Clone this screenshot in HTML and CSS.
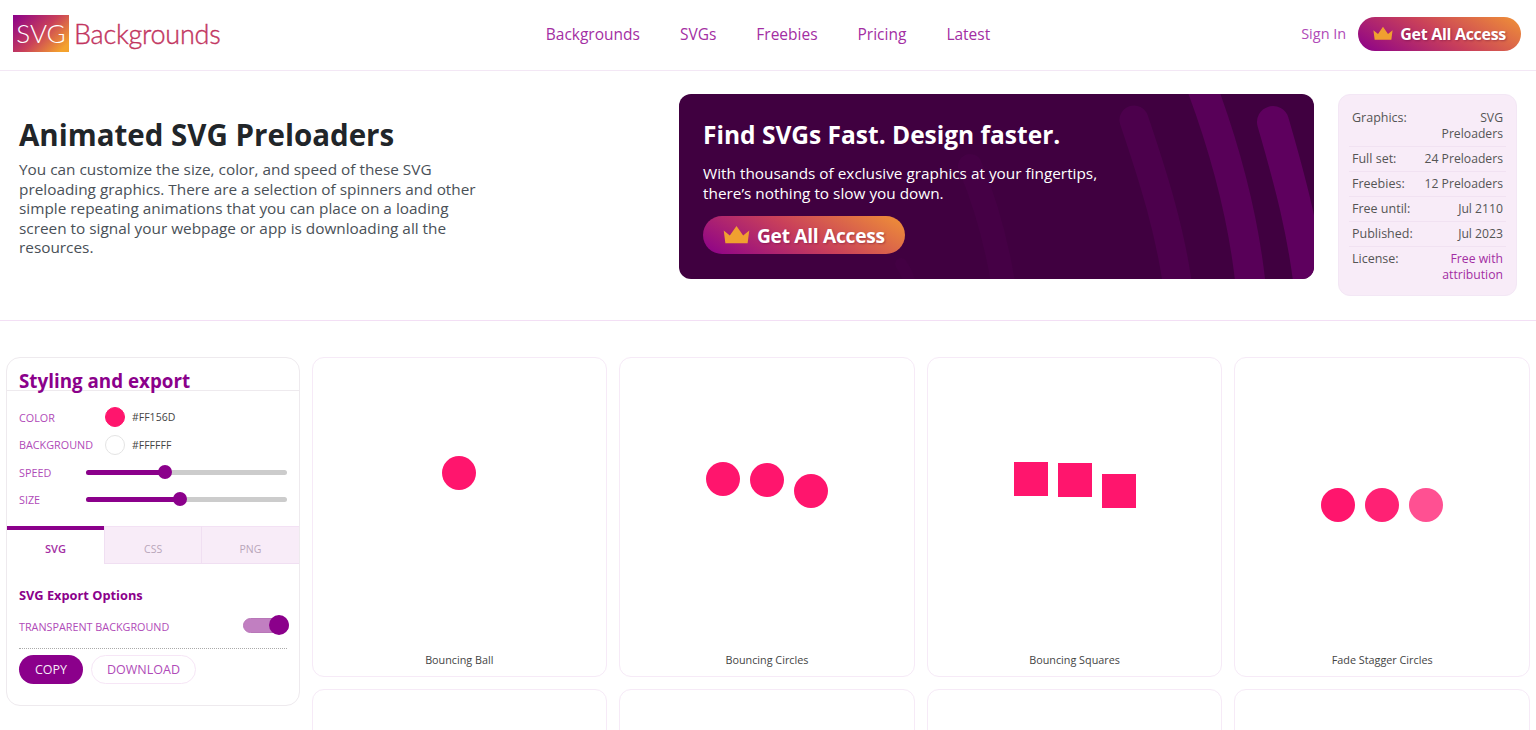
FILE: index.html
```html
<!DOCTYPE html>
<html lang="en">
<head>
  <meta charset="UTF-8" />
  <title>Animated SVG Preloaders - SVG Backgrounds</title>
  <link rel="stylesheet" href="styles.css">
</head>
<body>

  <!-- Header -->
  <header class="site-header">
    <a class="logo" href="#">
      <span class="logo-box">SVG</span>
      <span class="logo-name">Backgrounds</span>
    </a>
    <nav class="nav-links">
      <a href="#">Backgrounds</a>
      <a href="#">SVGs</a>
      <a href="#">Freebies</a>
      <a href="#">Pricing</a>
      <a href="#">Latest</a>
    </nav>
    <div class="header-actions">
      <a class="sign-in" href="#">Sign In</a>
      <a class="btn-access" href="#">
        <svg class="crown" viewBox="0 0 24 18"><path d="M2 16.500 0.500 5l5.500 4.500L12 1l6 8.500L23.500 5 22 16.500z"/></svg>
        Get All Access
      </a>
    </div>
  </header>

  <!-- Intro -->
  <section class="hero">
    <div class="hero-text">
      <h1>Animated SVG Preloaders</h1>
      <p>You can customize the size, color, and speed of these SVG preloading graphics. There are a selection of spinners and other simple repeating animations that you can place on a loading screen to signal your webpage or app is downloading all the resources.</p>
    </div>
    <div class="promo">
      <svg class="promo-arcs" viewBox="0 0 635 185">
        <path class="arc-0" d="M222 170C227 177 230 183 232 195" />
        <path class="arc-1" d="M291 72C305 105 318 150 325 195" />
        <path class="arc-2" d="M455 26C475 85 492 140 499 195" />
        <path class="arc-3" d="M518 -20C545 50 565 125 572 195" />
        <path class="arc-4" d="M594 28C612 90 625 140 631 195" />
      </svg>
      <h2>Find SVGs Fast. Design faster.</h2>
      <p>With thousands of exclusive graphics at your fingertips,<br>there’s nothing to slow you down.</p>
      <a class="btn-access btn-large" href="#">
        <svg class="crown" viewBox="0 0 24 18"><path d="M2 16.500 0.500 5l5.500 4.500L12 1l6 8.500L23.500 5 22 16.500z"/></svg>
        Get All Access
      </a>
    </div>
    <dl class="facts">
      <div class="fact"><dt>Graphics:</dt><dd>SVG Preloaders</dd></div>
      <div class="fact"><dt>Full set:</dt><dd>24 Preloaders</dd></div>
      <div class="fact"><dt>Freebies:</dt><dd>12 Preloaders</dd></div>
      <div class="fact"><dt>Free until:</dt><dd>Jul 2110</dd></div>
      <div class="fact"><dt>Published:</dt><dd>Jul 2023</dd></div>
      <div class="fact"><dt>License:</dt><dd><a href="#">Free with attribution</a></dd></div>
    </dl>
  </section>

  <!-- Main -->
  <main class="workspace">
    <aside class="panel">
      <h3 class="panel-title">Styling and export</h3>
      <div class="controls">
        <div class="control">
          <span class="control-label label-wide">Color</span>
          <span class="swatch swatch-pink"></span>
          <span class="hex">#FF156D</span>
        </div>
        <div class="control">
          <span class="control-label label-wide">Background</span>
          <span class="swatch"></span>
          <span class="hex">#FFFFFF</span>
        </div>
        <div class="control">
          <span class="control-label label-short">Speed</span>
          <div class="slider"><div class="slider-fill fill-speed"><span class="slider-thumb"></span></div></div>
        </div>
        <div class="control">
          <span class="control-label label-short">Size</span>
          <div class="slider"><div class="slider-fill fill-size"><span class="slider-thumb"></span></div></div>
        </div>
      </div>
      <div class="tabs">
        <a class="tab active" href="#">SVG</a>
        <a class="tab" href="#">CSS</a>
        <a class="tab" href="#">PNG</a>
      </div>
      <div class="export">
        <h4>SVG Export Options</h4>
        <div class="export-row">
          <span class="control-label">Transparent background</span>
          <span class="toggle"><span class="toggle-knob"></span></span>
        </div>
        <div class="export-actions">
          <a class="btn-copy" href="#">COPY</a>
          <a class="btn-download" href="#">DOWNLOAD</a>
        </div>
      </div>
    </aside>

    <div class="card-grid">
      <div class="card">
        <div class="card-art art-ball">
          <svg viewBox="0 0 34 34" width="34" height="34"><circle cx="17" cy="17" r="17"/></svg>
        </div>
        <div class="card-name">Bouncing Ball</div>
      </div>
      <div class="card">
        <div class="card-art art-circles">
          <svg viewBox="0 0 122 46" width="122" height="46"><circle cx="17" cy="17" r="17"/><circle cx="61" cy="18" r="17"/><circle cx="105" cy="29" r="17"/></svg>
        </div>
        <div class="card-name">Bouncing Circles</div>
      </div>
      <div class="card">
        <div class="card-art art-circles">
          <svg viewBox="0 0 122 46" width="122" height="46"><rect x="0" y="0" width="34" height="34"/><rect x="44" y="1" width="34" height="34"/><rect x="88" y="12" width="34" height="34"/></svg>
        </div>
        <div class="card-name">Bouncing Squares</div>
      </div>
      <div class="card">
        <div class="card-art art-fade">
          <svg viewBox="0 0 122 34" width="122" height="34"><circle cx="17" cy="17" r="17"/><circle cx="61" cy="17" r="17" opacity=".95"/><circle cx="105" cy="17" r="17" opacity=".75"/></svg>
        </div>
        <div class="card-name">Fade Stagger Circles</div>
      </div>
      <div class="card"></div>
      <div class="card"></div>
      <div class="card"></div>
      <div class="card"></div>
    </div>
  </main>

</body>
</html>
```

FILE: styles.css
```css
/* Global Styles */
* {
  box-sizing: border-box;
}

html, body {
  height: 730px;
  overflow: hidden;
}

body {
  font-family: 'Open Sans', 'Noto Sans', sans-serif;
  margin: 0;
  background-color: #fff;
  color: #333;
}

a {
  text-decoration: none;
}

/* Header */
.site-header {
  display: grid;
  grid-template-columns: 1fr auto 1fr;
  align-items: center;
  height: 71px;
  padding: 0 15px 0 13px;
  border-bottom: 1px solid #f3e7f5;
}

.logo {
  display: flex;
  align-items: center;
  gap: 5px;
  margin-top: -3px;
}

.logo-box {
  width: 56px;
  height: 37px;
  background: linear-gradient(135deg, #8b008b 0%, #c9405a 50%, #f4a22d 90%);
  color: #fff;
  font-family: 'Lato', sans-serif;
  font-weight: 300;
  font-size: 26px;
  line-height: 37px;
  text-align: center;
}

.logo-name {
  font-family: 'Lato', sans-serif;
  font-weight: 300;
  font-size: 27px;
  letter-spacing: -0.25px;
  color: #c2355f;
  -webkit-text-stroke: 0.4px #c2355f;
}

.nav-links {
  display: flex;
  gap: 40px;
  margin-top: -2px;
  padding-left: 2px;
}

.nav-links a {
  color: #a32ea3;
  font-size: 15.500px;
}

.header-actions {
  display: flex;
  justify-content: flex-end;
  align-items: center;
  gap: 12px;
  margin-top: -3px;
}

.sign-in {
  color: #b04ab8;
  font-size: 14.500px;
}

.btn-access {
  display: inline-flex;
  align-items: center;
  gap: 7px;
  height: 34px;
  padding: 0 15px;
  border-radius: 17px;
  background: linear-gradient(30deg, #8b008b 0%, #c9405a 50%, #f09236 100%);
  color: #fff;
  font-size: 16px;
  font-weight: 700;
  letter-spacing: -0.3px;
  text-shadow: 1px 1px 2px rgba(90, 0, 60, 0.4);
}

.crown {
  width: 20px;
  height: 15px;
  fill: #f0a030;
}

/* Intro */
.hero {
  display: flex;
  height: 250px;
  padding: 23px 19px 0;
  border-bottom: 1px solid #f3dff5;
}

.hero-text {
  width: 660px;
  padding-top: 21px;
}

.hero-text h1 {
  margin: 0 0 5px;
  font-size: 29.500px;
  line-height: 40px;
  font-weight: 700;
  color: #212529;
}

.hero-text p {
  width: 472px;
  margin: 0;
  font-size: 15.350px;
  line-height: 19.600px;
  color: #495057;
}

.promo {
  position: relative;
  overflow: hidden;
  width: 635px;
  height: 185px;
  padding: 24px;
  border-radius: 12px;
  background-color: #400040;
  color: #fff;
}

.promo-arcs {
  position: absolute;
  left: 0;
  top: 0;
  width: 100%;
  height: 100%;
  fill: none;
  stroke-linecap: round;
}

.arc-0 { stroke: #430043; stroke-width: 12; }
.arc-1 { stroke: #450045; stroke-width: 24; }
.arc-2 { stroke: #4c004c; stroke-width: 29; }
.arc-3 { stroke: #580058; stroke-width: 30; }
.arc-4 { stroke: #5e005e; stroke-width: 32; }

.promo h2,
.promo p,
.promo .btn-access {
  position: relative;
}

.promo h2 {
  margin: 0 0 13px;
  font-size: 24.500px;
  line-height: 33px;
  font-weight: 700;
}

.promo p {
  margin: 0 0 13px;
  font-size: 15.350px;
  line-height: 19.600px;
}

.btn-large {
  height: 38px;
  border-radius: 19px;
  padding: 0 20px;
  font-size: 19.200px;
  gap: 7px;
}

.btn-large .crown {
  width: 27px;
  height: 20px;
}

.facts {
  width: 179px;
  height: 202px;
  margin: 0 0 0 24px;
  padding: 10.500px 10px 5px;
  border: 1px solid #f3e7f5;
  border-radius: 12px;
  background-color: #f8ecf8;
  font-size: 12.500px;
  line-height: 16px;
  color: #555;
}

.fact {
  display: flex;
  justify-content: space-between;
  gap: 10px;
  padding: 4px 3px 4.200px;
  border-bottom: 1px solid #f1e2f2;
}

.fact:last-child {
  border-bottom: none;
}

.fact dt {
  white-space: nowrap;
}

.fact dd {
  margin: 0;
  font-size: 12.200px;
  text-align: right;
}

.fact dd a {
  color: #a32ea3;
}

/* Main */
.workspace {
  display: flex;
  gap: 12px;
  padding: 36px 6px 0;
}

.panel {
  flex: 0 0 293.500px;
  height: 349px;
  border: 1px solid #eeeaee;
  border-radius: 14px;
  overflow: hidden;
}

.panel-title {
  height: 33px;
  margin: 0;
  padding: 10px 12px 0;
  border-bottom: 1px solid #eeeaee;
  font-size: 18.800px;
  line-height: 26px;
  font-weight: 700;
  color: #8b008b;
  white-space: nowrap;
}

.controls {
  height: 135px;
  padding: 15px 12px 0;
}

.control {
  display: flex;
  align-items: center;
  height: 22px;
  margin-bottom: 5.500px;
}

.control-label {
  color: #b04ab8;
  font-size: 10.800px;
  text-transform: uppercase;
  white-space: nowrap;
}

.label-wide {
  width: 86px;
}

.label-short {
  width: 67px;
}

.swatch {
  width: 20px;
  height: 20px;
  margin-right: 7px;
  border: 1px solid #e4e4e4;
  border-radius: 50%;
}

.swatch-pink {
  background-color: #ff156d;
  border-color: #ff156d;
}

.hex {
  font-size: 10.500px;
  color: #444;
}

.slider {
  width: 201px;
  height: 5px;
  border-radius: 3px;
  background-color: #ccc;
}

.slider-fill {
  position: relative;
  height: 5px;
  border-radius: 3px;
  background-color: #8b008b;
}

.fill-speed { width: 79px; }
.fill-size { width: 94px; }

.slider-thumb {
  position: absolute;
  right: -7px;
  top: -5px;
  width: 14px;
  height: 14px;
  border-radius: 50%;
  background-color: #8b008b;
}

.tabs {
  display: flex;
  height: 38px;
}

.tab {
  flex: 1;
  display: flex;
  align-items: center;
  justify-content: center;
  padding-top: 7px;
  background-color: #f8ecf8;
  border-top: 1px solid #f3e1f4;
  border-bottom: 1px solid #f0dff2;
  border-left: 1px solid #f0dff2;
  color: #b9a6ba;
  font-size: 10.500px;
}

.tab.active {
  flex: 0 0 97px;
  padding-top: 3px;
  background-color: #fff;
  border: none;
  border-top: 4px solid #8b008b;
  color: #a32ea3;
  font-size: 11px;
  font-weight: 600;
}

.export {
  padding: 0 12px;
}

.export h4 {
  margin: 21px 0 0;
  font-size: 12.800px;
  line-height: 20px;
  font-weight: 700;
  color: #8b008b;
}

.export-row {
  display: flex;
  justify-content: space-between;
  align-items: center;
  height: 38px;
  padding-bottom: 6px;
  margin-top: 6px;
  border-bottom: 1px dotted #aaa;
}

.toggle {
  position: relative;
  width: 46px;
  height: 15px;
  margin: -2px -2px 0 0;
  border: 1px solid #b877b8;
  border-radius: 8px;
  background-color: #c17fc1;
}

.toggle-knob {
  position: absolute;
  right: -1px;
  top: -4px;
  width: 20px;
  height: 20px;
  border-radius: 50%;
  background-color: #8b008b;
}

.export-actions {
  display: flex;
  gap: 8px;
  margin-top: 6px;
}

.btn-copy,
.btn-download {
  display: flex;
  align-items: center;
  justify-content: center;
  height: 29px;
  border-radius: 15px;
  font-size: 12.500px;
}

.btn-copy {
  width: 64px;
  background-color: #8b008b;
  color: #f8ecf8;
}

.btn-download {
  width: 105px;
  border: 1px solid #f6e6f6;
  color: #b04ab8;
}

/* Preloader cards */
.card-grid {
  flex: 1;
  display: grid;
  grid-template-columns: repeat(4, 1fr);
  grid-auto-rows: 320px;
  gap: 12px;
}

.card {
  display: flex;
  flex-direction: column;
  border: 1px solid #f6eaf7;
  border-radius: 12px;
}

.card-art {
  flex: 1;
  display: flex;
  justify-content: center;
  fill: #ff156d;
}

.art-ball { padding-top: 98px; }
.art-circles { padding-top: 104px; }
.art-fade { padding-top: 130px; }

.card-name {
  height: 23px;
  font-size: 10.800px;
  line-height: 14px;
  text-align: center;
  color: #444;
}
```
